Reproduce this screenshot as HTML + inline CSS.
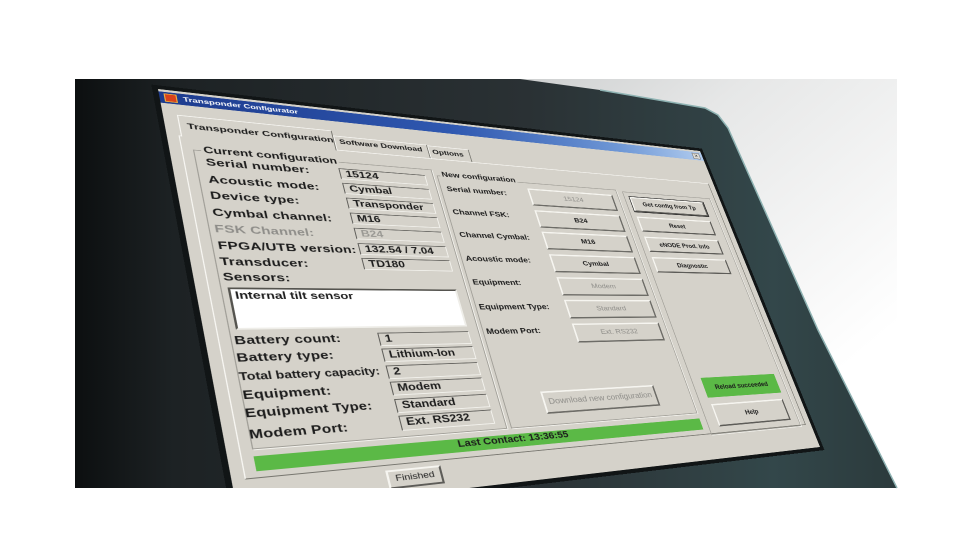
<!DOCTYPE html>
<html><head><meta charset="utf-8"><style>
*{margin:0;padding:0;box-sizing:border-box}
body{width:972px;height:554px;background:#fff;position:relative;overflow:hidden;font-family:"Liberation Sans",sans-serif}
#clip{position:absolute;left:75px;top:79px;width:822px;height:409px;overflow:hidden}
#scr{position:absolute;left:-75px;top:-79px;width:640px;height:480px;background:#d5d2ca;transform-origin:0 0;
transform:matrix3d(1.28903,0.19225,0,0.00063164, 0.091271,0.72433,0,-0.00031683, 0,0,1,0, 158,89,0,1);
outline:5px solid #111516;color:#1b1b1b}
#scr div{position:absolute}
.t{font-weight:bold;white-space:nowrap}
.L{font-size:13px;line-height:16px;font-weight:bold;white-space:nowrap;letter-spacing:.2px}
.f{border:1px solid;border-color:#5f5e5a #f3f2ed #f3f2ed #5f5e5a;font-size:12px;font-weight:bold;padding-left:5px;line-height:13px;white-space:nowrap}
.R{font-size:10px;line-height:12px;font-weight:bold;white-space:nowrap}
.rf{border:2px solid;border-color:#f6f5f0 #6d6c67 #6d6c67 #f6f5f0;font-size:9.5px;text-align:center;line-height:21px;white-space:nowrap}
.g{color:#8d8c88;font-weight:normal}
.b{border:2px solid;border-color:#f6f5f0 #5d5c58 #5d5c58 #f6f5f0;font-size:9px;font-weight:bold;text-align:center;white-space:nowrap}
.grp{border:1px solid #a19f98;box-shadow:1px 1px 0 #f4f3ee}
</style></head><body>
<svg width="972" height="554" style="position:absolute;left:0;top:0">
<defs>
<linearGradient id="bg" x1="0" y1="0" x2="1" y2="0.6"><stop offset="0" stop-color="#9ea2a3"/><stop offset="0.6" stop-color="#e6e7e7"/><stop offset="1" stop-color="#ffffff"/></linearGradient>
<linearGradient id="bz" x1="0" y1="0" x2="1" y2="0"><stop offset="0" stop-color="#0c0f10"/><stop offset="0.12" stop-color="#1d2224"/><stop offset="0.55" stop-color="#2a3134"/><stop offset="0.85" stop-color="#33474a"/><stop offset="1" stop-color="#2b3a3c"/></linearGradient>
</defs>
<rect x="75" y="79" width="822" height="409" fill="url(#bg)"/>
<polygon points="75,79 520,79 600,90 705,108 718,115 728,128 818,330 897,488 75,488" fill="url(#bz)"/>
<polyline points="600,90 705,108 718,115 728,128 818,330 897,488" fill="none" stroke="#8fb3b3" stroke-width="1.5"/>
</svg>
<div id="clip"><div id="scr">
<div style="left:0;top:3px;width:640px;height:15px;background:linear-gradient(90deg,#1d3b8e,#2f58b0 45%,#6f98d6 80%,#b0cbee)"></div>
<div style="left:4px;top:5px;width:11px;height:11px;background:#d8421c;border:1px solid #f0b040"></div>
<div class="t" style="left:20px;top:5px;font-size:8.5px;color:#fff;line-height:11px">Transponder Configurator</div>
<div style="left:624px;top:5px;width:12px;height:11px;background:#dcdad4;border:1px solid #777;font-size:9px;line-height:9px;text-align:center">×</div>

<div style="left:10px;top:59px;width:622px;height:388px;border:1px solid;border-color:#f8f7f3 #77766f #77766f #f8f7f3"></div>
<div style="left:12px;top:32px;width:143px;height:28px;border:1px solid;border-bottom:none;border-color:#f8f7f3 #77766f #77766f #f8f7f3;background:#d5d2ca"></div>
<div class="t" style="left:19px;top:40px;font-size:10.5px">Transponder Configuration</div>
<div style="left:155px;top:39px;width:100px;height:20px;border:1px solid;border-bottom:none;border-color:#f8f7f3 #77766f #77766f #f8f7f3"></div>
<div class="t" style="left:160px;top:42px;font-size:9.5px">Software Download</div>
<div style="left:255px;top:40px;width:48px;height:19px;border:1px solid;border-bottom:none;border-color:#f8f7f3 #77766f #77766f #f8f7f3"></div>
<div class="t" style="left:259px;top:44px;font-size:9.5px">Options</div>

<div class="grp" style="left:20px;top:76px;width:232px;height:342px"></div>
<div class="t" style="left:27px;top:68px;font-size:12px;background:#d5d2ca;padding:0 2px">Current configuration</div>

<div class="L" style="left:29px;top:83px">Serial number:</div>
<div class="L" style="left:28px;top:105px">Acoustic mode:</div>
<div class="L" style="left:27px;top:125px">Device type:</div>
<div class="L" style="left:26px;top:146px">Cymbal channel:</div>
<div class="L" style="left:25px;top:166px;color:#8e8d89">FSK Channel:</div>
<div class="L" style="left:25px;top:186px">FPGA/UTB version:</div>
<div class="L" style="left:24px;top:205px">Transducer:</div>
<div class="L" style="left:24px;top:223px">Sensors:</div>

<div class="f" style="left:152px;top:85px;width:91px;height:15px">15124</div>
<div class="f" style="left:152px;top:105px;width:91px;height:15px">Cymbal</div>
<div class="f" style="left:152px;top:125px;width:91px;height:15px">Transponder</div>
<div class="f" style="left:152px;top:145px;width:91px;height:15px">M16</div>
<div class="f" style="left:152px;top:165px;width:91px;height:15px;color:#9a9994">B24</div>
<div class="f" style="left:152px;top:185px;width:91px;height:15px">132.54 / 7.04</div>
<div class="f" style="left:152px;top:204px;width:91px;height:15px">TD180</div>

<div style="left:26px;top:243px;width:215px;height:48px;background:#fff;border:2px solid;border-color:#55544f #efeee9 #efeee9 #55544f;font-size:12px;font-weight:bold;padding:1px 3px;line-height:13px">Internal tilt sensor</div>

<div class="L" style="left:23px;top:295px">Battery count:</div>
<div class="L" style="left:22px;top:314px">Battery type:</div>
<div class="L" style="left:21px;top:335px;font-size:11.5px;letter-spacing:0">Total battery capacity:</div>
<div class="L" style="left:21px;top:354px">Equipment:</div>
<div class="L" style="left:20px;top:373px">Equipment Type:</div>
<div class="L" style="left:20px;top:395px">Modem Port:</div>

<div class="f" style="left:149px;top:297px;width:92px;height:16px">1</div>
<div class="f" style="left:149px;top:316px;width:92px;height:16px">Lithium-Ion</div>
<div class="f" style="left:149px;top:336px;width:92px;height:16px">2</div>
<div class="f" style="left:149px;top:355px;width:92px;height:16px">Modem</div>
<div class="f" style="left:149px;top:375px;width:92px;height:16px">Standard</div>
<div class="f" style="left:149px;top:394px;width:92px;height:17px">Ext. RS232</div>

<div style="left:20px;top:425px;width:462px;height:15px;background:#5bb946"></div>
<div class="t" style="left:198px;top:425px;font-size:11px;line-height:13px">Last Contact: 13:36:55</div>

<div class="grp" style="left:256px;top:84px;width:226px;height:334px"></div>
<div class="t" style="left:260px;top:77px;font-size:10px;background:#d5d2ca;padding:0 2px">New configuration</div>
<div class="R" style="left:263px;top:98px">Serial number:</div>
<div class="R" style="left:262px;top:131px">Channel FSK:</div>
<div class="R" style="left:262px;top:163px">Channel Cymbal:</div>
<div class="R" style="left:261px;top:196px">Acoustic mode:</div>
<div class="R" style="left:261px;top:228px">Equipment:</div>
<div class="R" style="left:260px;top:261px">Equipment Type:</div>
<div class="R" style="left:260px;top:293px">Modem Port:</div>

<div class="rf g" style="left:361px;top:93px;width:113px;height:26px">15124</div>
<div class="rf t" style="left:361px;top:126px;width:113px;height:26px">B24</div>
<div class="rf t" style="left:361px;top:158px;width:113px;height:26px">M16</div>
<div class="rf t" style="left:361px;top:191px;width:113px;height:26px">Cymbal</div>
<div class="rf g" style="left:361px;top:224px;width:113px;height:26px">Modem</div>
<div class="rf g" style="left:361px;top:256px;width:113px;height:26px">Standard</div>
<div class="rf g" style="left:361px;top:289px;width:113px;height:26px">Ext. RS232</div>

<div class="rf g" style="left:299px;top:376px;width:138px;height:28px;font-size:10px;line-height:24px">Download new configuration</div>

<div class="grp" style="left:490px;top:86px;width:134px;height:362px"></div>
<div class="b" style="left:498px;top:94px;width:112px;height:24px;line-height:19px;outline:1px solid #222">Get config from Tp</div>
<div class="b" style="left:498px;top:126px;width:112px;height:24px;line-height:20px">Reset</div>
<div class="b" style="left:498px;top:158px;width:112px;height:24px;line-height:20px">eNODE Prod. Info</div>
<div class="b" style="left:498px;top:190px;width:112px;height:24px;line-height:20px">Diagnostic</div>
<div style="left:504px;top:370px;width:110px;height:28px;background:#5bb946;font-size:9px;font-weight:bold;text-align:center;line-height:28px">Reload succeeded</div>
<div class="b" style="left:505px;top:407px;width:107px;height:31px;line-height:27px">Help</div>

<div class="b" style="left:125px;top:452px;width:51px;height:20px;line-height:16px;font-weight:normal;font-size:9.5px">Finished</div>
</div></div>
</body></html>
